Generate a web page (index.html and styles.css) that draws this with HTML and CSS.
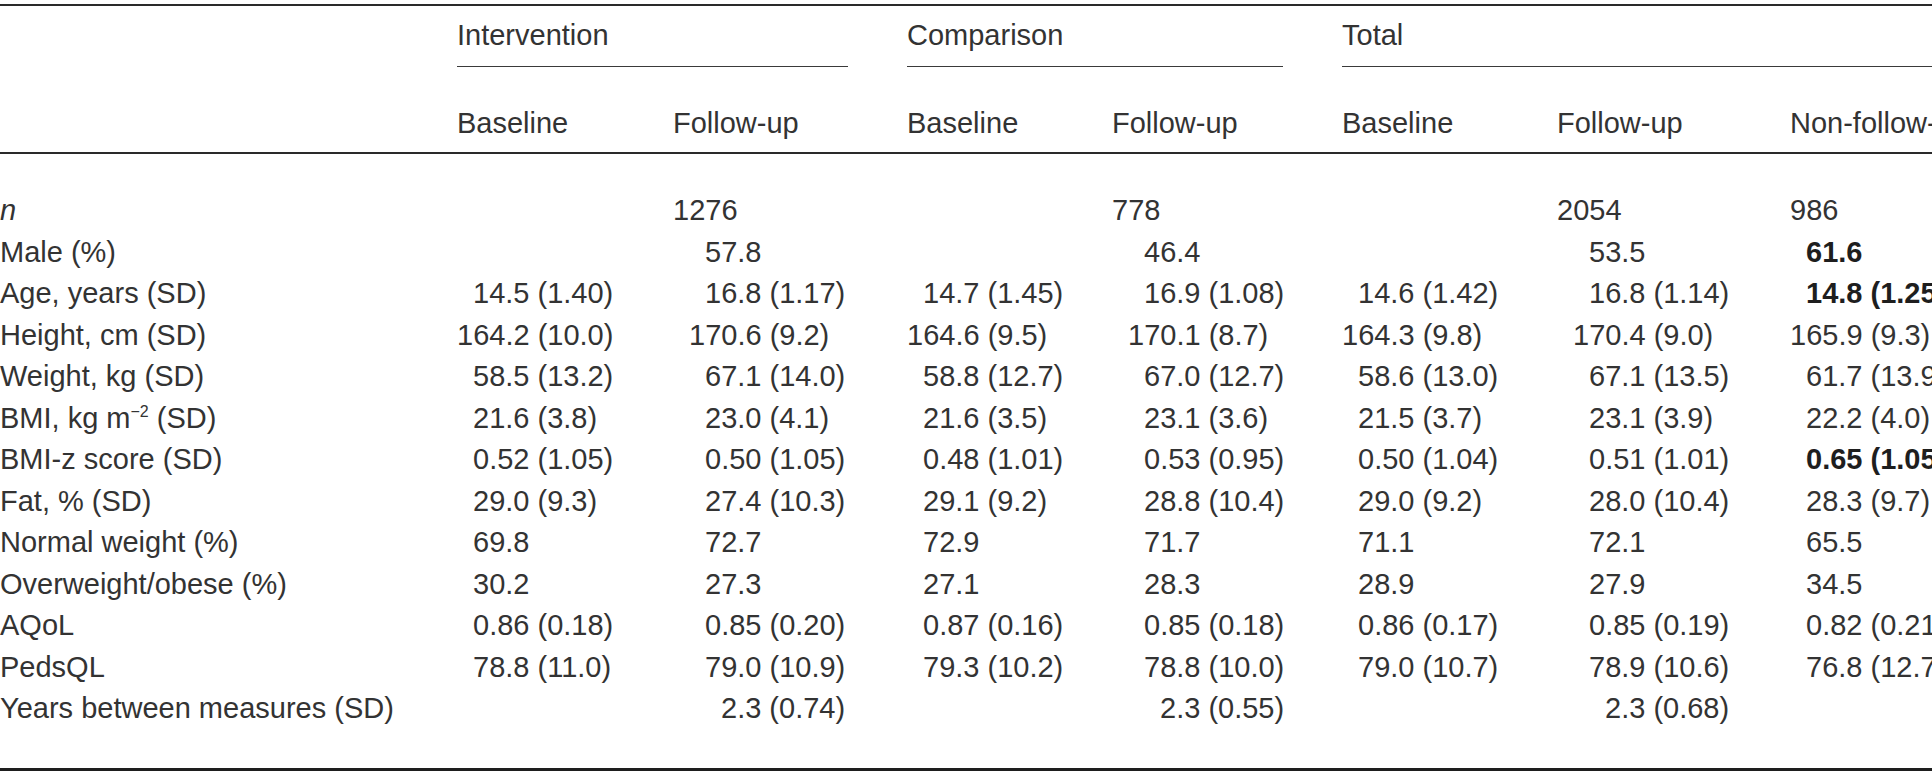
FILE: index.html
```html
<!DOCTYPE html>
<html lang="en">
<head>
<meta charset="utf-8">
<title>Table</title>
<link rel="stylesheet" href="styles.css">
</head>
<body>
<table class="t">
  <colgroup>
    <col class="c-label"><col class="c-b1"><col class="c-f1"><col class="c-b2"><col class="c-f2"><col class="c-b3"><col class="c-f3"><col class="c-nf">
  </colgroup>
  <thead>
    <tr class="grp">
      <th rowspan="2" class="corner"></th>
      <th colspan="2"><div class="gl gl-gap">Intervention</div></th>
      <th colspan="2"><div class="gl gl-gap">Comparison</div></th>
      <th colspan="3"><div class="gl">Total</div></th>
    </tr>
    <tr class="sub">
      <th>Baseline</th><th>Follow-up</th>
      <th>Baseline</th><th>Follow-up</th>
      <th>Baseline</th><th>Follow-up</th><th>Non-follow-up</th>
    </tr>
  </thead>
  <tbody>
    <tr class="first">
      <td class="lab"><i>n</i></td><td></td><td>1276</td><td></td><td>778</td><td></td><td>2054</td><td>986</td>
    </tr>
    <tr>
      <td class="lab">Male (%)</td><td></td><td class="i2">57.8</td><td></td><td class="i2">46.4</td><td></td><td class="i2">53.5</td><td class="i1 b">61.6</td>
    </tr>
    <tr>
      <td class="lab">Age, years (SD)</td><td class="i1">14.5 (1.40)</td><td class="i2">16.8 (1.17)</td><td class="i1">14.7 (1.45)</td><td class="i2">16.9 (1.08)</td><td class="i1">14.6 (1.42)</td><td class="i2">16.8 (1.14)</td><td class="i1 b">14.8 (1.25)</td>
    </tr>
    <tr>
      <td class="lab">Height, cm (SD)</td><td>164.2 (10.0)</td><td class="i1">170.6 (9.2)</td><td>164.6 (9.5)</td><td class="i1">170.1 (8.7)</td><td>164.3 (9.8)</td><td class="i1">170.4 (9.0)</td><td>165.9 (9.3)</td>
    </tr>
    <tr>
      <td class="lab">Weight, kg (SD)</td><td class="i1">58.5 (13.2)</td><td class="i2">67.1 (14.0)</td><td class="i1">58.8 (12.7)</td><td class="i2">67.0 (12.7)</td><td class="i1">58.6 (13.0)</td><td class="i2">67.1 (13.5)</td><td class="i1">61.7 (13.9)</td>
    </tr>
    <tr>
      <td class="lab">BMI, kg m<span class="sup">−2</span> (SD)</td><td class="i1">21.6 (3.8)</td><td class="i2">23.0 (4.1)</td><td class="i1">21.6 (3.5)</td><td class="i2">23.1 (3.6)</td><td class="i1">21.5 (3.7)</td><td class="i2">23.1 (3.9)</td><td class="i1">22.2 (4.0)</td>
    </tr>
    <tr>
      <td class="lab">BMI-z score (SD)</td><td class="i1">0.52 (1.05)</td><td class="i2">0.50 (1.05)</td><td class="i1">0.48 (1.01)</td><td class="i2">0.53 (0.95)</td><td class="i1">0.50 (1.04)</td><td class="i2">0.51 (1.01)</td><td class="i1 b">0.65 (1.05)</td>
    </tr>
    <tr>
      <td class="lab">Fat, % (SD)</td><td class="i1">29.0 (9.3)</td><td class="i2">27.4 (10.3)</td><td class="i1">29.1 (9.2)</td><td class="i2">28.8 (10.4)</td><td class="i1">29.0 (9.2)</td><td class="i2">28.0 (10.4)</td><td class="i1">28.3 (9.7)</td>
    </tr>
    <tr>
      <td class="lab">Normal weight (%)</td><td class="i1">69.8</td><td class="i2">72.7</td><td class="i1">72.9</td><td class="i2">71.7</td><td class="i1">71.1</td><td class="i2">72.1</td><td class="i1">65.5</td>
    </tr>
    <tr>
      <td class="lab">Overweight/obese (%)</td><td class="i1">30.2</td><td class="i2">27.3</td><td class="i1">27.1</td><td class="i2">28.3</td><td class="i1">28.9</td><td class="i2">27.9</td><td class="i1">34.5</td>
    </tr>
    <tr>
      <td class="lab">AQoL</td><td class="i1">0.86 (0.18)</td><td class="i2">0.85 (0.20)</td><td class="i1">0.87 (0.16)</td><td class="i2">0.85 (0.18)</td><td class="i1">0.86 (0.17)</td><td class="i2">0.85 (0.19)</td><td class="i1">0.82 (0.21)</td>
    </tr>
    <tr>
      <td class="lab">PedsQL</td><td class="i1">78.8 (11.0)</td><td class="i2">79.0 (10.9)</td><td class="i1">79.3 (10.2)</td><td class="i2">78.8 (10.0)</td><td class="i1">79.0 (10.7)</td><td class="i2">78.9 (10.6)</td><td class="i1">76.8 (12.7)</td>
    </tr>
    <tr class="last">
      <td class="lab">Years between measures (SD)</td><td></td><td class="i3">2.3 (0.74)</td><td></td><td class="i3">2.3 (0.55)</td><td></td><td class="i3">2.3 (0.68)</td><td></td>
    </tr>
  </tbody>
</table>
</body>
</html>
```

FILE: styles.css
```css
html, body {
  margin: 0;
  padding: 0;
  background: #ffffff;
  overflow: hidden;
}

body {
  padding-top: 4px;
  font-family: "Liberation Sans", Arial, sans-serif;
  font-size: 29px;
  color: #333333;
}

.t {
  border-collapse: separate;
  border-spacing: 0;
  table-layout: fixed;
  width: 2040px;
  border-top: 2px solid #2a2a2a;
  border-bottom: 3px solid #1e1e1e;
}

.c-label { width: 457px; }
.c-b1 { width: 216px; }
.c-f1 { width: 234px; }
.c-b2 { width: 205px; }
.c-f2 { width: 230px; }
.c-b3 { width: 215px; }
.c-f3 { width: 233px; }
.c-nf { width: 250px; }

th, td {
  padding: 0;
  text-align: left;
  font-weight: normal;
  white-space: nowrap;
  vertical-align: top;
}

.grp th {
  padding-top: 13px;
  line-height: 32px;
}

.gl {
  padding-bottom: 15px;
  border-bottom: 1px solid #3a3a3a;
}

.gl-gap {
  margin-right: 59px;
}

.corner {
  border-bottom: 2px solid #2a2a2a;
}

.sub th {
  padding-top: 40px;
  padding-bottom: 13px;
  line-height: 32px;
  border-bottom: 2px solid #2a2a2a;
}

tbody td {
  line-height: 41.5px;
}

tbody .first td {
  padding-top: 36px;
}

tbody .last td {
  padding-bottom: 38px;
}

.i1 { padding-left: 16px; }
.i2 { padding-left: 32px; }
.i3 { padding-left: 48px; }

.b { font-weight: bold; color: #1e1e1e; }

.lab i { font-style: italic; }

.sup {
  font-size: 16px;
  line-height: 0;
  vertical-align: 11px;
}
```
